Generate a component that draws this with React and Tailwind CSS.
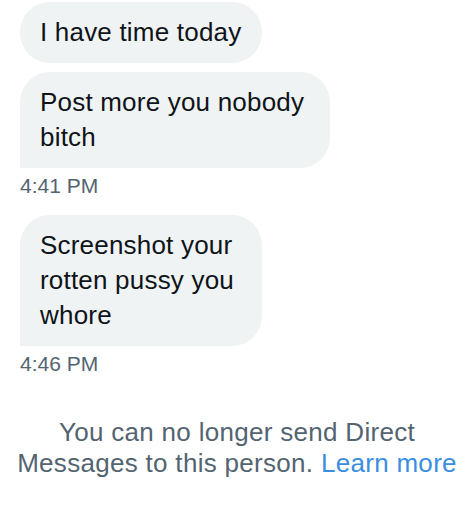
import React from "react"

function Bubble({ lines, square, width }) {
    return (
        <div
            className={`${width} bg-[#eff3f4] text-[#0f1419] px-5 py-[13px] text-[26px] tracking-[0.2px] leading-[35px] whitespace-nowrap rounded-[30px] ${square ? "rounded-bl-none" : ""}`}
        >
            {lines.map((l, i) => (
                <div key={i}>{l}</div>
            ))}
        </div>
    )
}

export default function App() {
    return (
        <div
            className="w-[474px] h-[521px] bg-white overflow-hidden"
            style={{ fontFamily: "'Liberation Sans', Arial, sans-serif" }}
        >
            <div className="flex flex-col items-start px-5 pt-[2px]">
                <Bubble lines={["I have time today"]} width="w-[242px]" />
                <div className="mt-[9px]">
                    <Bubble lines={["Post more you nobody", "bitch"]} square width="w-[310px]" />
                </div>
                <div className="mt-[5px] text-[21px] leading-[26px] text-[#536471]">4:41 PM</div>
                <div className="mt-[16px]">
                    <Bubble lines={["Screenshot your", "rotten pussy you", "whore"]} square width="w-[242px]" />
                </div>
                <div className="mt-[5px] text-[21px] leading-[26px] text-[#536471]">4:46 PM</div>
            </div>

            <div className="mt-[40px] text-center text-[26px] tracking-[0.3px] leading-[31px] text-[#536471]">
                You can no longer send Direct
                <br />
                Messages to this person. <span className="text-[#3a8ee0]">Learn more</span>
            </div>
        </div>
    )
}
